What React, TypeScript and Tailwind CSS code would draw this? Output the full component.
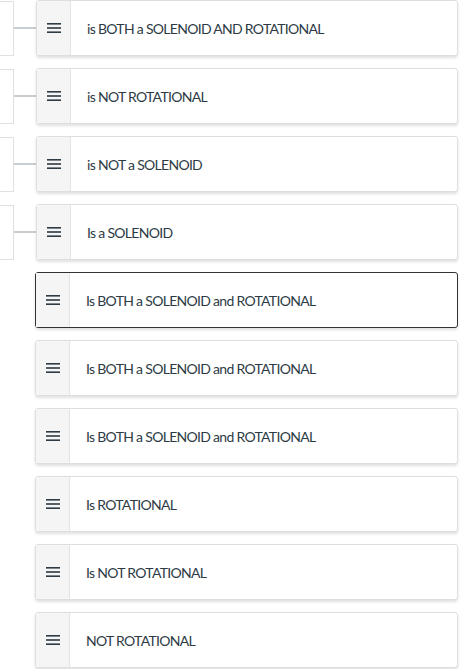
const matched = [
  "is BOTH a SOLENOID AND ROTATIONAL",
  "is NOT ROTATIONAL",
  "is NOT a SOLENOID",
  "Is a SOLENOID",
];

const loose = [
  { text: "Is BOTH a SOLENOID and ROTATIONAL", active: true },
  { text: "Is BOTH a SOLENOID and ROTATIONAL" },
  { text: "Is BOTH a SOLENOID and ROTATIONAL" },
  { text: "Is ROTATIONAL" },
  { text: "Is NOT ROTATIONAL" },
  { text: "NOT ROTATIONAL" },
];

const Grip = () => (
  <svg width="14" height="10" viewBox="0 0 14 10" className="text-[#2d3b45]">
    <rect x="0" y="0" width="14" height="1.6" fill="currentColor" />
    <rect x="0" y="4.2" width="14" height="1.6" fill="currentColor" />
    <rect x="0" y="8.4" width="14" height="1.6" fill="currentColor" />
  </svg>
);

const Card = ({ text, active }: { text: string; active?: boolean }) => (
  <div
    className={`flex h-14 flex-1 bg-white rounded-[3px] shadow-[0_2px_3px_rgba(0,0,0,0.12)] ${
      active ? "border border-[#333]" : "border border-[#dedede]"
    }`}
  >
    <div className="flex w-[34px] shrink-0 items-center justify-center bg-[#f5f5f5] border-r border-[#e4e4e4]">
      <Grip />
    </div>
    <div className="flex items-center pl-4 text-[14px] tracking-[-0.7px] text-[#2d3b45]">{text}</div>
  </div>
);

export default function App() {
  return (
    <div className="w-[474px] h-[669px] overflow-hidden bg-white font-['Lato',sans-serif]">
      <div className="flex flex-col gap-3 pr-4">
        {matched.map((t) => (
          <div key={t} className="flex items-center">
            <div className="h-[55px] w-[14px] shrink-0 border border-l-0 border-[#e0e0e0] bg-white" />
            <div className="h-[2px] w-[22px] shrink-0 bg-[#c7cdd1]" />
            <Card text={t} />
          </div>
        ))}
        {loose.map((c, i) => (
          <div key={i} className="flex pl-[35px]">
            <Card text={c.text} active={c.active} />
          </div>
        ))}
      </div>
    </div>
  );
}
